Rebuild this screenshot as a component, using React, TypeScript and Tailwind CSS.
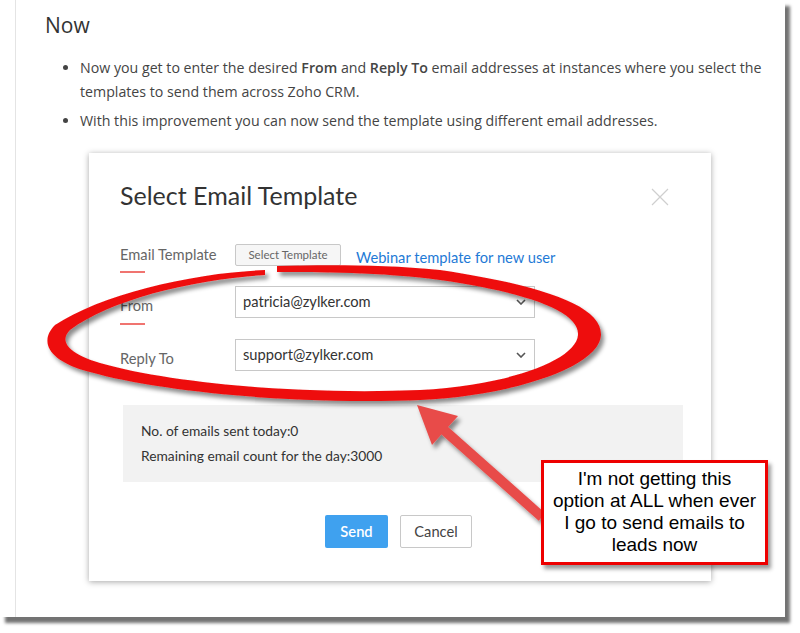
import React from "react";

const Chevron = () => (
  <svg width="10" height="6" viewBox="0 0 10 6" className="shrink-0">
    <path d="M1 1l4 4 4-4" fill="none" stroke="#555" strokeWidth="1.6" />
  </svg>
);

function Field({ label, value, mark }: { label: string; value: string; mark?: boolean }) {
  return (
    <div className="flex items-start">
      <div className="w-[115px] pt-[9px]">
        <div className="leading-[20px] text-[14.7px] text-[#666]">{label}</div>
        {mark && <div className="mt-[8px] h-[2px] w-[25px] bg-[#f07470]" />}
      </div>
      <div className="flex h-[32px] w-[300px] items-center justify-between border border-[#c8c8c8] bg-white pl-[7px] pr-[8px] text-[14.7px] text-[#333]">
        <span>{value}</span>
        <Chevron />
      </div>
    </div>
  );
}

function Annotations() {
  return (
    <svg
      className="pointer-events-none absolute left-0 top-0"
      width="800"
      height="633"
      viewBox="0 0 800 633"
    >
      <defs>
        <filter id="sh" x="-10%" y="-10%" width="130%" height="140%">
          <feDropShadow dx="3" dy="4" stdDeviation="2.2" floodColor="#000" floodOpacity="0.45" />
        </filter>
      </defs>
      {/* hand drawn ellipse */}
      <path
        filter="url(#sh)"
        fill="#ee1010"
        d="M265 270 C190 273 100 295 55 325 C40 340 45 360 90 372 C160 392 300 405 420 400 C520 395 600 365 601 335 C602 305 540 285 440 270 C380 264 320 265 277 266 L277 272 C320 272 380 272 440 280 C530 293 580 312 578 335 C576 360 510 385 420 390 C300 395 170 383 100 363 C65 352 60 340 70 330 C110 300 190 280 265 275 Z"
      />
      {/* arrow */}
      <g filter="url(#sh)" fill="#e84c4a">
        <polygon points="417,405 458,416 432,445" />
        <polygon points="440.7,433.75 447.3,426.25 545.3,513.25 538.7,520.75" />
      </g>
    </svg>
  );
}

export default function App() {
  return (
    <div className="relative h-[633px] w-[800px] overflow-hidden bg-white font-['Open_Sans',sans-serif]">
      <div className="h-[617px] w-[785px] bg-white shadow-[5px_6px_3px_rgba(0,0,0,0.55)]">
        <div className="ml-[15px] h-full border-l border-[#e4e4e4] pl-[29px]">
          <h2 className="pt-[11px] text-[21px] font-normal leading-[28px] text-[#333]">Now</h2>
          <ul className="mt-[17px] pl-[35px] text-[14.2px] leading-[23.5px] text-[#444] list-disc marker:text-[#444]">
            <li>
              Now you get to enter the desired <b className="font-semibold">From</b> and{" "}
              <b className="font-semibold">Reply To</b> email addresses at instances where you select the
              templates to send them across Zoho CRM.
            </li>
            <li className="mt-[6px]">With this improvement you can now send the template using different email addresses.</li>
          </ul>

          <div className="ml-[44px] mt-[20px] h-[428px] w-[622px] bg-white pl-[31px] pr-[42px] pt-[27px] font-['Lato',sans-serif] shadow-[0_1px_6px_rgba(0,0,0,0.35)]">
            <div className="flex items-start justify-between">
              <h3 className="text-[25px] font-normal leading-[30px] text-[#333]">Select Email Template</h3>
              <svg width="18" height="18" viewBox="0 0 18 18" className="mt-[8px]">
                <path d="M1 1l16 16M17 1L1 17" stroke="#cfcfcf" strokeWidth="1.2" />
              </svg>
            </div>

            <div className="mt-[34px] flex items-start">
              <div className="w-[115px]">
                <div className="text-[14.7px] leading-[20px] text-[#666]">Email Template</div>
                <div className="mt-[7px] h-[2px] w-[25px] bg-[#f07470]" />
              </div>
              <button className="h-[22px] w-[106px] rounded-[2px] border border-[#c8c8c8] bg-[#f6f6f6] text-[11.5px] text-[#666]">
                Select Template
              </button>
              <span className="ml-[15px] mt-[3px] text-[14.7px] leading-[20px] text-[#1f7ad6]">
                Webinar template for new user
              </span>
            </div>

            <div className="mt-[13px]">
              <Field label="From" value="patricia@zylker.com" mark />
            </div>
            <div className="mt-[14px]">
              <Field label="Reply To" value="support@zylker.com" />
            </div>

            <div className="ml-[3px] mt-[34px] h-[77px] w-[560px] bg-[#f2f2f2] pl-[18px] pt-[13px] text-[13.8px] leading-[25px] text-[#333]">
              <div>No. of emails sent today:0</div>
              <div>Remaining email count for the day:3000</div>
            </div>

            <div className="mt-[33px] flex justify-center gap-[12px] pl-[8px]">
              <button className="h-[33px] w-[63px] rounded-[2px] bg-[#3fa1ef] text-[14.7px] font-semibold text-white">
                Send
              </button>
              <button className="h-[33px] w-[72px] rounded-[2px] border border-[#c8c8c8] bg-white text-[14.7px] text-[#444]">
                Cancel
              </button>
            </div>
          </div>
        </div>
      </div>

      <Annotations />

      <div className="absolute left-[541px] top-[460px] h-[105px] w-[227px] border-[3px] border-[#ee0000] bg-white pt-[5px] text-center font-['Liberation_Sans',Arial,sans-serif] text-[19px] leading-[22px] text-black shadow-[3px_4px_4px_rgba(0,0,0,0.4)]">
        I'm not getting this
        <br />
        option at ALL when ever
        <br />
        I go to send emails to
        <br />
        leads now
      </div>
    </div>
  );
}
